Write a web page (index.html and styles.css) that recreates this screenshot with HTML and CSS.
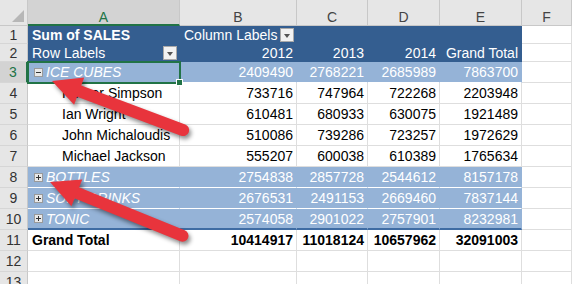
FILE: index.html
```html
<!DOCTYPE html>
<html>
<head>
<meta charset="utf-8">
<link rel="stylesheet" href="styles.css">
</head>
<body>
<div class="sheet">
  <div class="grid">
    <div class="corner"><span class="tri"></span></div>
    <div class="colh sel">A</div>
    <div class="colh">B</div>
    <div class="colh">C</div>
    <div class="colh">D</div>
    <div class="colh">E</div>
    <div class="colh">F</div>

    <div class="rowh">1</div>
    <div class="c dark b">Sum of SALES</div>
    <div class="c dark lbl">Column Labels<span class="dd"></span></div>
    <div class="c dark"></div>
    <div class="c dark"></div>
    <div class="c dark"></div>
    <div class="c"></div>

    <div class="rowh">2</div>
    <div class="c dark lbl">Row Labels<span class="dd"></span></div>
    <div class="c dark n">2012</div>
    <div class="c dark n">2013</div>
    <div class="c dark n">2014</div>
    <div class="c dark n">Grand Total</div>
    <div class="c"></div>

    <div class="rowh selr">3</div>
    <div class="c lt grp active"><span class="tg minus"></span>ICE CUBES</div>
    <div class="c lt n">2409490</div>
    <div class="c lt n">2768221</div>
    <div class="c lt n">2685989</div>
    <div class="c lt n">7863700</div>
    <div class="c"></div>

    <div class="rowh">4</div>
    <div class="c nm">Homer Simpson</div>
    <div class="c n">733716</div>
    <div class="c n">747964</div>
    <div class="c n">722268</div>
    <div class="c n">2203948</div>
    <div class="c"></div>

    <div class="rowh">5</div>
    <div class="c nm">Ian Wright</div>
    <div class="c n">610481</div>
    <div class="c n">680933</div>
    <div class="c n">630075</div>
    <div class="c n">1921489</div>
    <div class="c"></div>

    <div class="rowh">6</div>
    <div class="c nm">John Michaloudis</div>
    <div class="c n">510086</div>
    <div class="c n">739286</div>
    <div class="c n">723257</div>
    <div class="c n">1972629</div>
    <div class="c"></div>

    <div class="rowh">7</div>
    <div class="c nm">Michael Jackson</div>
    <div class="c n">555207</div>
    <div class="c n">600038</div>
    <div class="c n">610389</div>
    <div class="c n">1765634</div>
    <div class="c"></div>

    <div class="rowh">8</div>
    <div class="c lt grp"><span class="tg plus"></span>BOTTLES</div>
    <div class="c lt n">2754838</div>
    <div class="c lt n">2857728</div>
    <div class="c lt n">2544612</div>
    <div class="c lt n">8157178</div>
    <div class="c"></div>

    <div class="rowh">9</div>
    <div class="c lt grp"><span class="tg plus"></span>SOFT DRINKS</div>
    <div class="c lt n">2676531</div>
    <div class="c lt n">2491153</div>
    <div class="c lt n">2669460</div>
    <div class="c lt n">7837144</div>
    <div class="c"></div>

    <div class="rowh">10</div>
    <div class="c lt grp last"><span class="tg plus"></span>TONIC</div>
    <div class="c lt n last">2574058</div>
    <div class="c lt n last">2901022</div>
    <div class="c lt n last">2757901</div>
    <div class="c lt n last">8232981</div>
    <div class="c"></div>

    <div class="rowh">11</div>
    <div class="c b tot">Grand Total</div>
    <div class="c n b tot">10414917</div>
    <div class="c n b tot">11018124</div>
    <div class="c n b tot">10657962</div>
    <div class="c n b tot">32091003</div>
    <div class="c"></div>

    <div class="rowh">12</div>
    <div class="c"></div><div class="c"></div><div class="c"></div><div class="c"></div><div class="c"></div><div class="c"></div>

    <div class="rowh">13</div>
    <div class="c"></div><div class="c"></div><div class="c"></div><div class="c"></div><div class="c"></div><div class="c"></div>
  </div>

  <svg class="arrows" width="572" height="284" viewBox="0 0 572 284">
    <g transform="translate(52 81) rotate(20.5)">
      <line x1="22" y1="0" x2="140" y2="0" stroke="#e8343c" stroke-width="12" stroke-linecap="round"/>
      <polygon points="0,0 29,-14.5 29,14.5" fill="#e8343c"/>
    </g>
    <g transform="translate(50 182) rotate(22.1)">
      <line x1="22" y1="0" x2="143" y2="0" stroke="#e8343c" stroke-width="12" stroke-linecap="round"/>
      <polygon points="0,0 29,-14.5 29,14.5" fill="#e8343c"/>
    </g>
  </svg>
</div>
</body>
</html>
```

FILE: styles.css
```css
html, body {
  margin: 0;
  padding: 0;
  background: #ffffff;
}

.sheet {
  position: relative;
  width: 572px;
  height: 284px;
  overflow: hidden;
  font-family: "Liberation Sans", Arial, sans-serif;
  font-size: 14px;
  color: #000;
}

.grid {
  display: grid;
  grid-template-columns: 28px 152px 117px 71px 72px 82px 1fr;
  grid-template-rows: 26px 18px 18px repeat(11, 21px);
}

.grid > div {
  box-sizing: border-box;
  white-space: nowrap;
}

.corner {
  position: relative;
  background: #e6e6e6;
  border-right: 1px solid #c8c8c8;
  border-bottom: 1px solid #c8c8c8;
}

.tri {
  position: absolute;
  right: 3px;
  bottom: 3px;
  width: 0;
  height: 0;
  border-left: 12px solid transparent;
  border-bottom: 12px solid #b7b7b7;
}

.colh {
  background: #e6e6e6;
  color: #444;
  text-align: center;
  line-height: 16px;
  padding-top: 9px;
  border-right: 1px solid #c8c8c8;
  border-bottom: 1px solid #c8c8c8;
}

.colh.sel {
  background: #d3d3d3;
  color: #217346;
  border-bottom: 2px solid #217346;
}

.rowh {
  background: #e6e6e6;
  color: #333;
  text-align: center;
  border-right: 1px solid #c8c8c8;
  border-bottom: 1px solid #d6d6d6;
  display: flex;
  align-items: center;
  justify-content: center;
}

.rowh.selr {
  background: #d3d3d3;
  color: #217346;
  border-right: 2px solid #217346;
}

.c {
  border-right: 1px solid #dedede;
  border-bottom: 1px solid #dedede;
  padding: 0 4px;
  display: flex;
  align-items: center;
  overflow: visible;
}

.n {
  justify-content: flex-end;
  padding-right: 3px;
}

.b { font-weight: bold; }

.dark {
  background: #345e90;
  color: #ffffff;
  border-color: #345e90;
}

.lt {
  background: #95b3d7;
  color: #ffffff;
  border-right-color: #95b3d7;
  border-bottom-color: #ffffff;
}

.lt.last {
  border-bottom: 2px solid #3f6ca3;
}

.grp {
  font-style: italic;
  padding-left: 6px;
}

.nm {
  padding-left: 34px;
}

.lbl {
  justify-content: space-between;
  padding-right: 2px;
}

.dd {
  position: relative;
  width: 14px;
  height: 14px;
  box-sizing: border-box;
  background: #f2f2f2;
  border: 1px solid #a9a9a9;
}

.dd::after {
  content: "";
  position: absolute;
  left: 3px;
  top: 5px;
  border-left: 3.5px solid transparent;
  border-right: 3.5px solid transparent;
  border-top: 4px solid #555;
}

.tg {
  position: relative;
  display: inline-block;
  width: 9px;
  height: 9px;
  box-sizing: border-box;
  background: #e9e9e9;
  border: 1px solid #9a9a9a;
  margin-right: 3px;
  flex: none;
}

.tg::before {
  content: "";
  position: absolute;
  left: 1px;
  top: 3px;
  width: 5px;
  height: 1px;
  background: #333;
}

.tg.plus::after {
  content: "";
  position: absolute;
  left: 3px;
  top: 1px;
  width: 1px;
  height: 5px;
  background: #333;
}

.active {
  position: relative;
  outline: 2px solid #217346;
  outline-offset: -1px;
  z-index: 1;
}

.active::after {
  content: "";
  position: absolute;
  right: -4px;
  bottom: -4px;
  width: 5px;
  height: 5px;
  background: #217346;
  border: 1px solid #ffffff;
}

.arrows {
  position: absolute;
  left: 0;
  top: 0;
  filter: drop-shadow(2px 3px 2px rgba(0, 0, 0, 0.45));
  z-index: 2;
}
```
